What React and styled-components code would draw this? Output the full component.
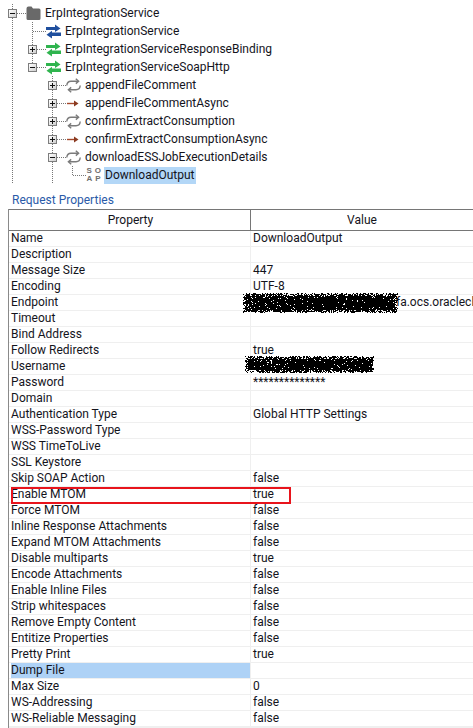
import styled, { createGlobalStyle, css } from "styled-components"

const GlobalStyle = createGlobalStyle`
  html, body {
    margin: 0;
    height: 100%;
    overflow: hidden;
    background: #fff;
  }
  body {
    font-family: Roboto, "Open Sans", sans-serif;
    font-size: 12px;
    color: #14141c;
  }
`

const Page = styled.div`
  width: 473px;
  height: 728px;
  overflow: hidden;
  display: flex;
  flex-direction: column;
`

// tree

const Tree = styled.div`
  padding: 4px 0 0 2px;
  height: 182px;
  box-sizing: border-box;
`

const TreeRow = styled.div`
  display: flex;
  align-items: center;
  height: 18px;
`

const dottedV = css`
  content: "";
  position: absolute;
  left: 10px;
  width: 1px;
  background: repeating-linear-gradient(to bottom, #777 0 1px, transparent 1px 2px);
`

const Cell = styled.div`
  position: relative;
  width: 20px;
  height: 18px;
  flex: none;

  &::before {
    ${dottedV}
    display: ${(p) => (p.$top ? "block" : "none")};
    top: 0;
    height: ${(p) => (p.$bottom ? "18px" : "9px")};
  }

  &::after {
    content: "";
    position: absolute;
    display: ${(p) => (p.$stub ? "block" : "none")};
    left: 11px;
    top: 9px;
    width: ${(p) => (p.$stub === "long" ? "14px" : "13px")};
    height: 1px;
    background: repeating-linear-gradient(to right, #777 0 1px, transparent 1px 2px);
  }
`

const Expander = styled.span`
  position: absolute;
  z-index: 1;
  left: 6px;
  top: 5px;
  width: 9px;
  height: 9px;
  box-sizing: border-box;
  border: 1px solid #7d7d7d;
  background: linear-gradient(135deg, #fff, #cfcfcf);

  &::before {
    content: "";
    position: absolute;
    left: 1px;
    top: 3px;
    width: 5px;
    height: 1px;
    background: #111;
  }

  &::after {
    content: "";
    display: ${(p) => (p.$open ? "none" : "block")};
    position: absolute;
    left: 3px;
    top: 1px;
    width: 1px;
    height: 5px;
    background: #111;
  }
`

const IconSlot = styled.span`
  display: flex;
  align-items: center;
  justify-content: center;
  width: 15px;
  height: 16px;
  margin-left: 4px;
  flex: none;
`

const NodeLabel = styled.span`
  height: 17px;
  line-height: 16px;
  padding: 0 1px;
  margin-left: 3px;
  white-space: nowrap;
  background: ${(p) => (p.$selected ? "#b3d7f7" : "transparent")};
`

const SoapMark = styled.span`
  display: block;
  width: 15px;
  margin-left: 1px;
  font-family: "Liberation Sans", sans-serif;
  font-size: 8px;
  font-weight: 700;
  line-height: 8px;
  letter-spacing: 3px;
  color: #6f6f6f;
  white-space: pre;
`

const FolderIcon = () => (
  <svg width="15" height="16" viewBox="0 0 15 16">
    <path d="M0.5 3.5q0-2 2-2h3l1.5 2h6q1.5 0 1.5 1.5v8.5q0 1.5-1.5 1.5h-11q-1.5 0-1.5-1.5z" fill="#696969" />
  </svg>
)

const SwapIcon = ({ color }) => (
  <svg width="15" height="15" viewBox="0 0 15 15">
    <path d="M0 3h9V0.5L14.5 4.5 9 8V6H0z" fill={color} />
    <path d="M15 8.5H6V6.8L0.5 10.7 6 14.5V12h9z" fill={color} />
  </svg>
)

const SyncIcon = () => (
  <svg width="15" height="15" viewBox="0 0 15 15" fill="none" stroke="#7b7b7b" strokeWidth="1.4">
    <path d="M0.8 7.5C1 4.5 3 3.3 5 3.3h7" />
    <path d="M9.8 0.8L12.6 3.3 9.8 5.6" />
    <path d="M14.2 7.5C14 10.5 12 11.7 10 11.7H3" />
    <path d="M5.2 9.4L2.4 11.7 5.2 14.2" />
  </svg>
)

const ArrowIcon = () => (
  <svg width="15" height="15" viewBox="0 0 15 15" fill="none">
    <path d="M1 7.5h9" stroke="#a5472a" strokeWidth="1.4" />
    <path d="M8 4.5l4.5 3-4.5 3z" fill="#8a3a20" />
  </svg>
)

const nodeIcon = {
  folder: <FolderIcon />,
  blue: <SwapIcon color="#1f4f9e" />,
  green: <SwapIcon color="#2fb44e" />,
  sync: <SyncIcon />,
  arrow: <ArrowIcon />,
  soap: <SoapMark>{"SO\nAP"}</SoapMark>,
}

// guides: one entry per indent column, true = the line goes on through this row
const treeNodes = [
  { guides: [], state: "open", icon: "folder", label: "ErpIntegrationService" },
  { guides: [true], state: "tee", icon: "blue", label: "ErpIntegrationService" },
  { guides: [true], state: "closed", icon: "green", label: "ErpIntegrationServiceResponseBinding" },
  { guides: [true], state: "open", last: true, icon: "green", label: "ErpIntegrationServiceSoapHttp" },
  { guides: [true, false], state: "closed", icon: "sync", label: "appendFileComment" },
  { guides: [true, false], state: "closed", icon: "arrow", label: "appendFileCommentAsync" },
  { guides: [true, false], state: "closed", icon: "sync", label: "confirmExtractConsumption" },
  { guides: [true, false], state: "closed", icon: "arrow", label: "confirmExtractConsumptionAsync" },
  { guides: [true, false], state: "open", icon: "sync", label: "downloadESSJobExecutionDetails" },
  { guides: [true, false, true], state: "leaf", last: true, icon: "soap", label: "DownloadOutput", selected: true },
]

function TreeNode({ node }) {
  const hasBox = node.state === "open" || node.state === "closed"
  return (
    <TreeRow>
      {node.guides.map((on, i) => (
        <Cell key={i} $top={on} $bottom />
      ))}
      <Cell $top $bottom={!node.last} $stub={node.state === "leaf" ? "long" : "short"}>
        {hasBox && <Expander $open={node.state === "open"} />}
      </Cell>
      <IconSlot>{nodeIcon[node.icon]}</IconSlot>
      <NodeLabel $selected={node.selected}>{node.label}</NodeLabel>
    </TreeRow>
  )
}

// properties table

const SectionTitle = styled.div`
  height: 27px;
  padding: 10px 0 0 12px;
  box-sizing: border-box;
  line-height: 16px;
  color: #2a5aa8;
`

const Table = styled.div`
  margin-left: 8px;
  flex: 1;
  display: flex;
  flex-direction: column;
  border-left: 1px solid #8a8a8a;
  background: #f0f0f0;
`

const HeadRow = styled.div`
  display: grid;
  grid-template-columns: 240px 1fr;
  height: 22px;
  padding-left: 2px;
  box-sizing: border-box;
  background: #fff;
  border-top: 1px solid #767676;
  border-bottom: 1px solid #767676;
`

const HeadCell = styled.div`
  text-align: center;
  line-height: 20px;
  border-right: ${(p) => (p.$divider ? "1px solid #767676" : "none")};
`

const Row = styled.div`
  display: grid;
  grid-template-columns: 240px 1fr;
  height: 16px;
  padding-left: 2px;
  box-sizing: border-box;
  background: #fff;
  border-bottom: 1px solid #efefef;
`

const NameCell = styled.div`
  line-height: 15px;
  white-space: nowrap;
  background: ${(p) => (p.$selected ? "#aed2f6" : "transparent")};
  border-right: 1px solid #efefef;
`

const ValueCell = styled.div`
  position: relative;
  line-height: 15px;
  padding-left: ${(p) => p.$indent || 2}px;
  white-space: nowrap;
`

const Highlight = styled.div`
  position: absolute;
  left: 11px;
  top: 487px;
  width: 280px;
  height: 17px;
  box-sizing: border-box;
  border: 2px solid #e8141c;
  pointer-events: none;
`

const RedactionBox = styled.svg`
  position: absolute;
  z-index: 2;
  left: ${(p) => p.$left}px;
  top: ${(p) => p.$top}px;
`

// black marker scribble, speckled at the edges
function Redaction({ width, height, left, top }) {
  const dots = []
  let seed = width * 31 + height
  const rnd = () => {
    seed = (seed * 9301 + 49297) % 233280
    return seed / 233280
  }
  for (let y = 0; y < height; y++) {
    for (let x = 0; x < width; x++) {
      const edge = Math.min(x, y, width - 1 - x, height - 1 - y)
      const chance = edge < 1 ? 0.35 : edge < 3 ? 0.7 : 0.95
      if (rnd() < chance) dots.push(`M${x} ${y}h1v1h-1z`)
    }
  }
  return (
    <RedactionBox width={width} height={height} $left={left} $top={top}>
      <path d={dots.join("")} fill="#000" />
    </RedactionBox>
  )
}

const properties = [
  ["Name", "DownloadOutput"],
  ["Description", ""],
  ["Message Size", "447"],
  ["Encoding", "UTF-8"],
  ["Endpoint", "fa.ocs.oraclecl"],
  ["Timeout", ""],
  ["Bind Address", ""],
  ["Follow Redirects", "true"],
  ["Username", ""],
  ["Password", "**************"],
  ["Domain", ""],
  ["Authentication Type", "Global HTTP Settings"],
  ["WSS-Password Type", ""],
  ["WSS TimeToLive", ""],
  ["SSL Keystore", ""],
  ["Skip SOAP Action", "false"],
  ["Enable MTOM", "true"],
  ["Force MTOM", "false"],
  ["Inline Response Attachments", "false"],
  ["Expand MTOM Attachments", "false"],
  ["Disable multiparts", "true"],
  ["Encode Attachments", "false"],
  ["Enable Inline Files", "false"],
  ["Strip whitespaces", "false"],
  ["Remove Empty Content", "false"],
  ["Entitize Properties", "false"],
  ["Pretty Print", "true"],
  ["Dump File", ""],
  ["Max Size", "0"],
  ["WS-Addressing", "false"],
  ["WS-Reliable Messaging", "false"],
]

export default function App() {
  return (
    <Page>
      <GlobalStyle />
      <Tree>
        {treeNodes.map((node, i) => (
          <TreeNode key={i} node={node} />
        ))}
      </Tree>
      <SectionTitle>Request Properties</SectionTitle>
      <Table>
        <HeadRow>
          <HeadCell $divider>Property</HeadCell>
          <HeadCell>Value</HeadCell>
        </HeadRow>
        {properties.map(([name, value]) => (
          <Row key={name}>
            <NameCell $selected={name === "Dump File"}>{name}</NameCell>
            <ValueCell $indent={name === "Endpoint" ? 145 : 2}>
              {value}
              {name === "Endpoint" && <Redaction width={155} height={20} left={-8} top={-2} />}
              {name === "Username" && <Redaction width={129} height={17} left={-6} top={-3} />}
            </ValueCell>
          </Row>
        ))}
      </Table>
      <Highlight />
    </Page>
  )
}
